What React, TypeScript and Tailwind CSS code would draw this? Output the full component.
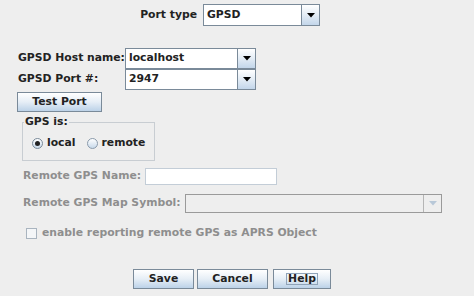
import React from 'react';

const FONT = { fontFamily: '"DejaVu Sans", "Liberation Sans", sans-serif' };

const Arrow = ({ color = '#000' }: { color?: string }) => (
    <svg width="8" height="5" viewBox="0 0 8 5">
        <path d="M0 0 H8 L4 4.5 Z" fill={color} />
    </svg>
);

const Combo = ({ value, w, h }: { value: string; w: string; h: string }) => (
    <div className={`flex ${w} ${h} border border-[#7a8a99] bg-white`}>
        <div className="flex-1 flex items-center pl-[3px] text-[#222]">{value}</div>
        <div className="w-[18px] flex items-center justify-center border-l border-[#7a8a99] bg-linear-to-b from-[#ffffff] via-[#e3ecf5] to-[#c3d6ea]">
            <Arrow />
        </div>
    </div>
);

const Button = ({ label, w, focused }: { label: string; w: string; focused?: boolean }) => (
    <button className={`${w} h-[20px] flex items-center justify-center border border-[#7a8a99] bg-linear-to-b from-[#ffffff] via-[#e6eef6] to-[#bcd2e8] text-[#222] font-bold`}>
        <span className={focused ? 'border border-[#8fa3b8] px-[1px] leading-[10px]' : ''}>{label}</span>
    </button>
);

export default function App() {
    return (
        <div className="w-[474px] h-[296px] bg-[#eeeeee] flex flex-col text-[10.8px] font-bold leading-none text-[#222] select-none" style={FONT}>
            {/* Port type */}
            <div className="mt-[4px] flex items-center">
                <span className="w-[197px] text-right">Port type</span>
                <div className="ml-[6px]">
                    <Combo value="GPSD" w="w-[117px]" h="h-[22px]" />
                </div>
            </div>

            {/* GPSD host / port */}
            <div className="mt-[22px] flex items-center">
                <span className="ml-[18px] w-[107px]">GPSD Host name:</span>
                <Combo value="localhost" w="w-[131px]" h="h-[21px]" />
            </div>
            <div className="flex items-center">
                <span className="ml-[18px] w-[107px]">GPSD Port #:</span>
                <Combo value="2947" w="w-[131px]" h="h-[21px]" />
            </div>

            <div className="mt-[2px] ml-[17px]">
                <Button label="Test Port" w="w-[85px]" />
            </div>

            {/* GPS is group */}
            <fieldset className="mt-[4px] ml-[22px] w-[133px] h-[45px] border border-[#c8cdd2] pl-[1px]">
                <legend className="px-[1px] leading-[12px]">GPS is:</legend>
                <div className="h-[31px] flex items-center pl-[8px]">
                    <span className="w-[11px] h-[11px] rounded-full border border-[#7a8a99] bg-linear-to-b from-[#ffffff] to-[#c8d9ea] flex items-center justify-center">
                        <span className="w-[5px] h-[5px] rounded-full bg-[#222]" />
                    </span>
                    <span className="ml-[4px]">local</span>
                    <span className="ml-[11px] w-[11px] h-[11px] rounded-full border border-[#8a9aab] bg-linear-to-b from-[#ffffff] to-[#c8d9ea]" />
                    <span className="ml-[4px]">remote</span>
                </div>
            </fieldset>

            {/* Disabled remote settings */}
            <div className="mt-[7px] flex items-center text-[#8e8e8e]">
                <span className="ml-[23px] w-[122px]">Remote GPS Name:</span>
                <div className="w-[132px] h-[17px] bg-white border border-[#c3cdd7]" />
            </div>
            <div className="mt-[9px] flex items-center text-[#8e8e8e]">
                <span className="ml-[23px] w-[162px]">Remote GPS Map Symbol:</span>
                <div className="flex w-[257px] h-[19px] border border-[#9a9a9a] bg-[#eeeeee]">
                    <div className="flex-1" />
                    <div className="w-[18px] flex items-center justify-center border-l border-[#b5b5b5]">
                        <Arrow color="#b8c8d8" />
                    </div>
                </div>
            </div>
            <div className="mt-[13px] h-[14px] flex items-center text-[#8e8e8e]">
                <span className="ml-[26px] w-[11px] h-[11px] border border-[#a9b4bf] bg-[#f4f6f8]" />
                <span className="ml-[5px]">enable reporting remote GPS as APRS Object</span>
            </div>

            {/* Dialog buttons */}
            <div className="mt-[29px] flex items-center">
                <div className="ml-[133px] flex items-center">
                    <Button label="Save" w="w-[61px]" />
                    <div className="ml-[3px]"><Button label="Cancel" w="w-[71px]" /></div>
                    <div className="ml-[5px]"><Button label="Help" w="w-[58px]" focused /></div>
                </div>
            </div>
        </div>
    );
}
